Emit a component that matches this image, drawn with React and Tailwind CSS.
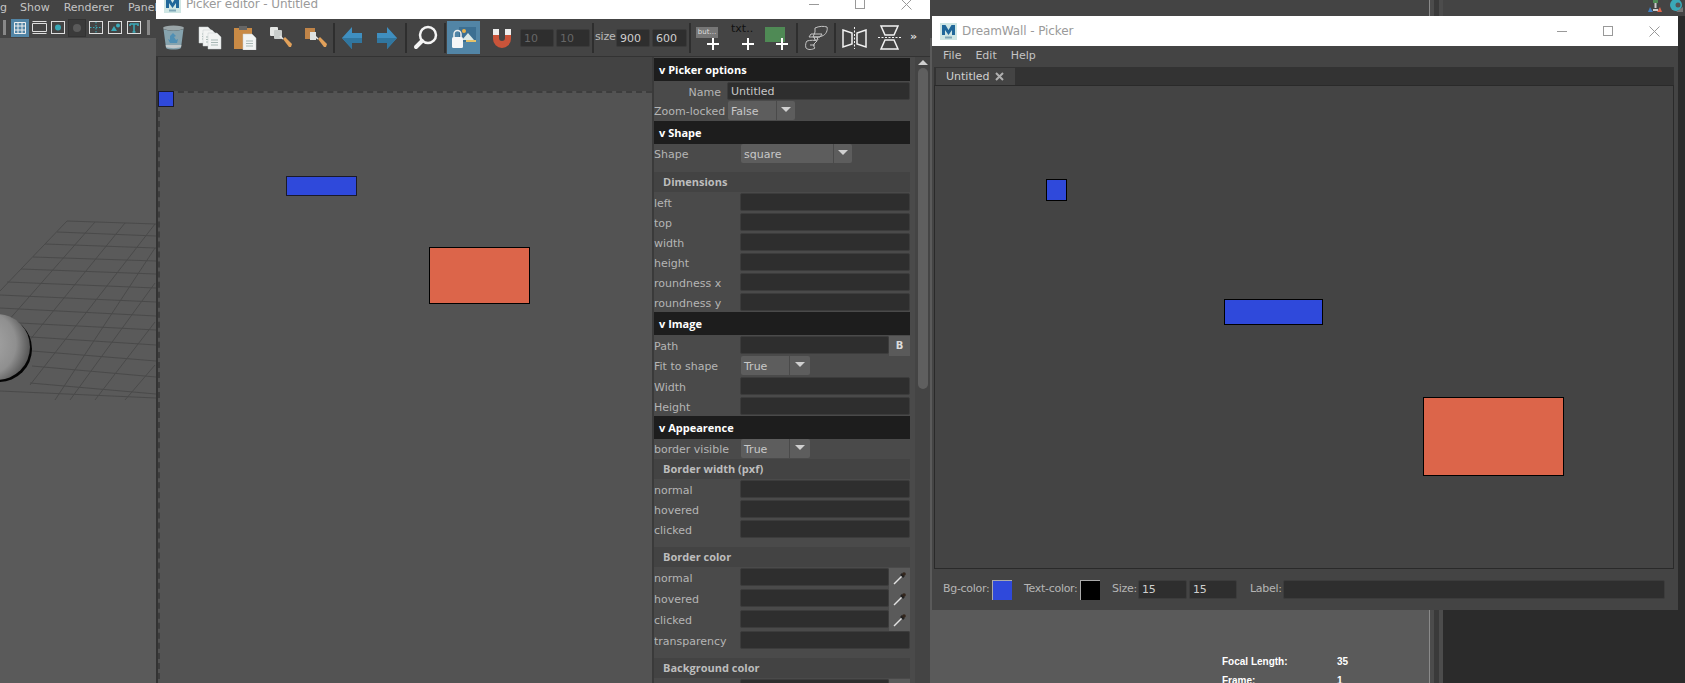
import React from "react";

const uiFont = { fontFamily: '"DejaVu Sans", sans-serif' };

function MayaLogo() {
  return (
    <svg width="17" height="17" viewBox="0 0 17 17">
      <rect width="17" height="17" fill="#cfe6e4" />
      <path d="M2 2h3.500l3 5 3-5H15v10h-3V7l-3.500 5-3.500-5v5H2z" fill="#20679a" />
      <rect x="5" y="13.500" width="7" height="2" fill="#7fa8b8" />
    </svg>
  );
}

function WinControls() {
  return (
    <div className="flex items-center h-full">
      <div className="w-[46px] flex justify-center">
        <div className="w-[10px] h-px bg-[#999]" />
      </div>
      <div className="w-[46px] flex justify-center">
        <div className="w-[10px] h-[10px] border border-[#999]" />
      </div>
      <div className="w-[46px] flex justify-center">
        <svg width="11" height="11" viewBox="0 0 11 11" stroke="#999" strokeWidth="1">
          <path d="M.5.5l10 10M10.500.5l-10 10" />
        </svg>
      </div>
    </div>
  );
}

function TitleBar({ title }) {
  return (
    <div className="h-[30px] bg-white flex items-center justify-between pl-[8px] pr-[1px] shrink-0">
      <div className="flex items-center gap-[5px]">
        <MayaLogo />
        <span className="text-[12px] tracking-[-0.1px] text-[#9a9a9a]">{title}</span>
      </div>
      <WinControls />
    </div>
  );
}

function Sep({ ml = "" }) {
  return <div className={`w-[2px] h-[30px] bg-[#2e2e2e] shrink-0 ${ml}`} />;
}

const Trash = () => (
  <svg width="23" height="25" viewBox="0 0 23 25">
    <ellipse cx="11.500" cy="3" rx="10.500" ry="2.500" fill="#9aa5a8" />
    <path d="M1.500 4l2.500 19c2 2 13 2 15 0l2.500-19c-4 2-16 2-20 0z" fill="#86a3ae" />
    <path d="M8 11l3-3 3 3-2 1 2 3 2-1-1 4h-7l-2-4 2 1z" fill="#4f8fb4" />
    <path d="M4 22c3 1.500 12 1.500 15 0l.4-2H3.700z" fill="#c2c8ca" />
  </svg>
);

const Page = ({ x, y, w = 13, h = 16 }) => (
  <g>
    <path d={`M${x} ${y}h${w - 4}l4 4v${h - 4}h-${w}z`} fill="#f2f4f3" stroke="#c5cccc" strokeWidth=".5" />
    <path d={`M${x + 3} ${y + 7}h${w - 6}M${x + 3} ${y + 9.5}h${w - 6}M${x + 3} ${y + 12}h${w - 6}`} stroke="#a9b9b6" strokeWidth="1" />
  </g>
);

const Copy = () => (
  <svg width="24" height="24" viewBox="0 0 24 24">
    <Page x={1} y={1} />
    <Page x={5} y={4} />
    <Page x={10} y={7} />
  </svg>
);

const Paste = () => (
  <svg width="25" height="24" viewBox="0 0 25 24">
    <rect x="1" y="2" width="18" height="21" fill="#c98a45" />
    <rect x="6" y="0" width="8" height="4" fill="#666" />
    <Page x={10} y={8} />
  </svg>
);

const TagCopy = ({ paste }) => (
  <svg width="24" height="23" viewBox="0 0 24 23">
    {paste
      ? <rect x="1" y="2" width="10" height="11" fill="#c08448" />
      : <rect x="1" y="1" width="8" height="9" rx="1" fill="#e4e6e4" />}
    {paste
      ? <rect x="6" y="6" width="6" height="8" fill="#dfe2e2" />
      : <rect x="5" y="4" width="8" height="9" rx="1" fill="#c9cdcb" />}
    <path d="M14 13l2-2 7 7-1 3h-2z" fill="#e2a15a" />
    <path d="M11 10l3 3" stroke="#e8e8e8" strokeWidth="1.500" />
  </svg>
);

const Arrow = ({ right }) => (
  <svg width="22" height="22" viewBox="0 0 22 22">
    <path
      d={right ? "M1 6h10V0l10 11-10 11v-6H1z" : "M21 6H11V0L1 11l10 11v-6h10z"}
      fill="#3f8fc0"
    />
    <path d={right ? "M1 11h20l-10 11v-6H1z" : "M21 11H1l10 11v-6h10z"} fill="#31769f" />
  </svg>
);

const Magnifier = () => (
  <svg width="25" height="25" viewBox="0 0 25 25" fill="none" stroke="#f4f4f4">
    <circle cx="15" cy="10" r="8" strokeWidth="2.500" />
    <path d="M9 16l-6 6" strokeWidth="4" strokeLinecap="round" />
  </svg>
);

const LockImage = () => (
  <div className="w-[33px] h-[33px] ml-[1px] bg-[#5285a6] flex items-center justify-center shrink-0">
    <svg width="26" height="26" viewBox="0 0 26 26">
      <rect x="8" y="2" width="17" height="15" fill="#3c6f92" />
      <circle cx="13" cy="6" r="2" fill="#e9b04a" />
      <path d="M11 15l6-7 6 7z" fill="#dbe8e6" />
      <rect x="15" y="15" width="10" height="2" fill="#e4c26a" />
      <path d="M3 12v-3a3.500 3.500 0 017 0v3" fill="none" stroke="#eee" strokeWidth="1.500" />
      <rect x="1" y="12" width="11" height="11" rx="1.500" fill="#f6f6f6" />
    </svg>
  </div>
);

const Magnet = () => (
  <svg width="20" height="20" viewBox="0 0 20 20">
    <path d="M1 1h6v9a3 3 0 006 0V1h6v10a9 9 0 01-18 0z" fill="#c9543a" />
    <rect x="1" y="1" width="6" height="6" fill="#eee" />
    <rect x="13" y="1" width="6" height="6" fill="#eee" />
  </svg>
);

const Plus = ({ className }) => (
  <div className={`absolute w-[12px] h-[12px] ${className}`}>
    <div className="absolute left-[5px] top-0 w-[2px] h-[12px] bg-white" />
    <div className="absolute left-0 top-[5px] w-[12px] h-[2px] bg-white" />
  </div>
);

const Linker = () => (
  <svg width="25" height="26" viewBox="0 0 25 26" fill="none" stroke="#c4c4c4" strokeWidth="1">
    <path d="M11 3c4-2 9-2 12-1 1 3-1 8-5 9l-3 1H9l2-5z" />
    <path d="M7 9h11l-2 3H5z" />
    <path d="M10 12l1 3h3l-1-3M3 16c3-1 8-1 10 0l-3 3c-1 1 0 3 1 4-3 2-7 2-9 0-1-3 0-6 1-7z" />
    <path d="M6 20h5" />
  </svg>
);

const FlipH = () => (
  <svg width="25" height="22" viewBox="0 0 25 22" fill="none" stroke="#f2f2f2" strokeWidth="1.500">
    <path d="M1 3l9 3v11l-9 3zM24 3l-9 3v11l9 3z" />
    <path d="M12.500 0v22" strokeDasharray="2 1.500" strokeWidth="1" />
  </svg>
);

const FlipV = () => (
  <svg width="23" height="25" viewBox="0 0 23 25" fill="none" stroke="#f2f2f2" strokeWidth="1.500">
    <path d="M3 1h17l-4 9H7zM3 24h17l-4-9H7z" />
    <path d="M0 12.500h23" strokeDasharray="2 1.500" strokeWidth="1" />
  </svg>
);

function ToolInput({ value, dim, className }) {
  return (
    <div className={`h-[18px] bg-[#2e2e2e] border border-[#3a3a3a] rounded-[2px] text-[11px] pl-[3px] leading-[17px] shrink-0 ${dim ? "text-[#666]" : "text-[#cfcfcf]"} ${className}`}>
      {value}
    </div>
  );
}

function EditorToolbar() {
  return (
    <div className="h-[37px] bg-[#444] flex items-center shrink-0 text-[11px]">
      <div className="w-[35px] flex justify-center"><Trash /></div>
      <div className="w-[37px] flex justify-center"><Copy /></div>
      <div className="w-[35px] flex justify-center"><Paste /></div>
      <div className="w-[35px] flex justify-center"><TagCopy /></div>
      <div className="w-[35px] flex justify-center"><TagCopy paste /></div>
      <Sep />
      <div className="w-[33px] flex justify-center"><Arrow /></div>
      <div className="w-[37px] flex justify-center"><Arrow right /></div>
      <Sep />
      <div className="w-[37px] flex justify-center"><Magnifier /></div>
      <Sep />
      <LockImage />
      <div className="w-[40px] pl-[4px] flex justify-center"><Magnet /></div>
      <ToolInput value="10" dim className="w-[34px]" />
      <ToolInput value="10" dim className="w-[34px] ml-[2px]" />
      <Sep ml="ml-[2px]" />
      <span className="text-[#bbb] ml-[1px] w-[21px] tracking-[-0.2px]">size</span>
      <ToolInput value="900" className="w-[34px]" />
      <ToolInput value="600" className="w-[35px] ml-[2px]" />
      <Sep ml="ml-[2px]" />
      <div className="relative w-[38px] h-[30px]">
        <div className="absolute left-[5px] top-[4px] w-[22px] h-[11px] bg-[#777] text-[7px] leading-[10px] text-[#ddd] text-center">but...</div>
        <Plus className="left-[16px] top-[15px]" />
      </div>
      <div className="relative w-[34px] h-[30px]">
        <div className="absolute left-[2px] top-[-1px] text-[11px] leading-[14px] text-[#111]">txt..</div>
        <Plus className="left-[13px] top-[15px]" />
      </div>
      <div className="relative w-[33px] h-[30px]">
        <div className="absolute left-[2px] top-[4px] w-[20px] h-[15px] bg-[#4f8a55]" />
        <Plus className="left-[13px] top-[15px]" />
      </div>
      <Sep />
      <div className="w-[36px] flex justify-center"><Linker /></div>
      <Sep />
      <div className="w-[36px] flex justify-center"><FlipH /></div>
      <div className="w-[34px] flex justify-center"><FlipV /></div>
      <span className="text-[#ddd] font-bold text-[11px] ml-[4px]">»</span>
    </div>
  );
}

function Header({ text }) {
  return (
    <div className="h-[23px] bg-[#1d1d1d] text-white font-bold text-[11px] leading-[23px] pl-[5px] shrink-0 font-['Open_Sans']">
      v {text}
    </div>
  );
}

function Group({ text }) {
  return (
    <div className="h-[20px] mb-[1px] bg-[#434343] text-[#bdbdbd] font-bold text-[11px] leading-[20px] pl-[9px] shrink-0 font-['Open_Sans']">
      {text}
    </div>
  );
}

function TextBox({ value, className = "flex-1" }) {
  return (
    <div className={`h-[18px] bg-[#2e2e2e] border border-[#3c3c3c] rounded-[2px] pl-[3px] text-[11px] leading-[18px] text-[#c8c8c8] ${className}`}>
      {value}
    </div>
  );
}

function Row({ label, h = "h-[20px]", children }) {
  return (
    <div className={`flex items-start shrink-0 ${h}`}>
      <span className="w-[86px] shrink-0 text-[11px] leading-[21px] text-[#b5b5b5] whitespace-nowrap">{label}</span>
      {children}
    </div>
  );
}

function Combo({ value, w, arrowW = "w-[18px]" }) {
  return (
    <div className="flex h-[19px] gap-[1px] ml-[1px]">
      <div className={`${w} bg-[#5d5d5d] rounded-l-[2px] pl-[3px] text-[11px] leading-[21px] text-[#c8c8c8]`}>{value}</div>
      <div className={`${arrowW} bg-[#5d5d5d] rounded-r-[2px] flex items-center justify-center pb-[2px]`}>
        <div className="w-0 h-0 border-l-[5px] border-r-[5px] border-t-[5px] border-l-transparent border-r-transparent border-t-[#d0d0d0]" />
      </div>
    </div>
  );
}

function Dropper() {
  return (
    <div className="w-[21px] h-[21px] bg-[#5a5a5a] flex items-center justify-center shrink-0">
      <svg width="15" height="15" viewBox="0 0 15 15" fill="none">
        <path d="M2 13l8-8" stroke="#e2e2e2" strokeWidth="1.500" />
        <path d="M9 3l3 3" stroke="#222" strokeWidth="2.500" />
        <circle cx="12" cy="3" r="1.800" fill="#33261c" />
      </svg>
    </div>
  );
}

function Panel() {
  return (
    <div className="w-[261px] pt-[1px] pr-[5px] flex flex-col bg-[#4a4a4a] overflow-hidden">
      <Header text="Picker options" />
      <div className="flex h-[19px] mt-[1px] items-start shrink-0">
        <span className="w-[67px] text-right text-[11px] leading-[21px] text-[#b5b5b5]">Name</span>
        <TextBox value="Untitled" className="ml-[6px] w-[183px]" />
      </div>
      <div className="flex h-[20px] items-start shrink-0">
        <span className="w-[73px] text-[11px] leading-[21px] text-[#b5b5b5] whitespace-nowrap">Zoom-locked</span>
        <Combo value="False" w="w-[48px]" />
      </div>
      <Header text="Shape" />
      <Row label="Shape" h="h-[19px]">
        <Combo value="square" w="w-[92px]" />
      </Row>
      <div className="h-[9px] shrink-0" />
      <Group text="Dimensions" />
      {["left", "top", "width", "height", "roundness x"].map((l) => (
        <Row key={l} label={l}><TextBox className="w-[170px]" /></Row>
      ))}
      <Row label="roundness y" h="h-[19px]"><TextBox className="w-[170px]" /></Row>
      <Header text="Image" />
      <div className="h-[1px] shrink-0" />
      <Row label="Path">
        <TextBox className="w-[149px]" />
        <div className="w-[21px] h-[20px] bg-[#5a5a5a] text-[#ddd] font-bold text-[10px] leading-[20px] text-center">B</div>
      </Row>
      <Row label="Fit to shape" h="h-[21px]">
        <Combo value="True" w="w-[48px]" arrowW="w-[20px]" />
      </Row>
      <Row label="Width"><TextBox className="w-[170px]" /></Row>
      <Row label="Height" h="h-[19px]"><TextBox className="w-[170px]" /></Row>
      <Header text="Appearence" />
      <Row label="border visible">
        <Combo value="True" w="w-[48px]" arrowW="w-[20px]" />
      </Row>
      <Group text="Border width (pxf)" />
      {["normal", "hovered", "clicked"].map((l) => (
        <Row key={l} label={l}><TextBox className="w-[170px]" /></Row>
      ))}
      <div className="h-[7px] shrink-0" />
      <Group text="Border color" />
      {["normal", "hovered", "clicked"].map((l) => (
        <Row key={l} label={l} h="h-[21px]">
          <TextBox className="w-[149px]" />
          <Dropper />
        </Row>
      ))}
      <Row label="transparency" h="h-[21px]"><TextBox className="w-[170px]" /></Row>
      <div className="h-[6px] shrink-0" />
      <Group text="Background color" />
      <Row label="normal" h="h-[21px]">
        <TextBox className="w-[149px]" />
        <Dropper />
      </Row>
    </div>
  );
}

function Scrollbar() {
  return (
    <div className="w-[15px] bg-[#444] flex flex-col items-center pt-[3px]">
      <div className="w-0 h-0 border-l-[5px] border-r-[5px] border-b-[5px] border-l-transparent border-r-transparent border-b-[#d0d0d0]" />
      <div className="w-[10px] h-[321px] mt-[3px] bg-[#5f5f5f] rounded-[5px]" />
    </div>
  );
}

function EditorWindow() {
  return (
    <div className="absolute left-[156px] top-[-11px] w-[774px] h-[700px] flex flex-col bg-[#444]">
      <TitleBar title="Picker editor - Untitled" />
      <EditorToolbar />
      <div className="flex flex-1 border-t border-[#333] min-h-0">
        <div className="relative w-[496px] flex flex-col border-l-2 border-[#333]">
          <div className="h-[34px] bg-[#434343]" />
          <div className="flex-1 bg-[#535353] border-t-2 border-l-2 border-dashed border-[#3d3d3d]" />
          <div className="absolute left-[0px] top-[34px] w-[16px] h-[16px] bg-[#2f49db] border border-[#1a1a2a]" />
          <div className="absolute left-[128px] top-[119px] w-[71px] h-[20px] bg-[#2f49db] border border-[#1a1a2a]" />
          <div className="absolute left-[271px] top-[190px] w-[101px] h-[57px] bg-[#dc654a] border border-black" />
        </div>
        <div className="w-[2px] bg-[#3a3a3a]" />
        <Panel />
        <Scrollbar />
      </div>
    </div>
  );
}

function SmallField({ value, className }) {
  return (
    <div className={`h-[19px] bg-[#2e2e2e] border border-[#3c3c3c] rounded-[2px] pl-[3px] text-[11px] leading-[18px] text-[#cfcfcf] shrink-0 ${className}`}>
      {value}
    </div>
  );
}

function PickerWindow() {
  return (
    <div className="absolute left-[932px] top-[16px] w-[746px] h-[594px] flex flex-col bg-[#444]">
      <TitleBar title="DreamWall - Picker" />
      <div className="h-[21px] flex items-center gap-[14px] pl-[11px] text-[11px] text-[#c4c4c4] shrink-0">
        <span>File</span>
        <span>Edit</span>
        <span>Help</span>
      </div>
      <div className="h-[18px] bg-[#333] flex items-end pl-[2px] mr-[4px] ml-[2px] shrink-0">
        <div className="w-[79px] h-[17px] bg-[#444] flex items-center pl-[10px] pt-[2px] gap-[5px] text-[11px] text-[#d0d0d0]">
          Untitled
          <svg width="9" height="9" viewBox="0 0 9 9" stroke="#b0b0b0" strokeWidth="2" className="mb-[2px]">
            <path d="M1 1l7 7M8 1l-7 7" />
          </svg>
        </div>
      </div>
      <div className="relative h-[484px] mx-[2px] mr-[4px] border border-[#2a2a2a] bg-[#444] shrink-0">
        <div className="absolute left-[111px] top-[93px] w-[21px] h-[22px] bg-[#2f49db] border border-black" />
        <div className="absolute left-[289px] top-[213px] w-[99px] h-[26px] bg-[#2f49db] border border-black" />
        <div className="absolute left-[488px] top-[311px] w-[141px] h-[79px] bg-[#dc654a] border border-black" />
      </div>
      <div className="flex items-center h-[41px] pl-[11px] text-[11px] tracking-[-0.3px] text-[#b5b5b5] shrink-0">
        <span className="w-[49px] whitespace-nowrap">Bg-color:</span>
        <div className="w-[20px] h-[20px] bg-[#2f49db] border-t border-l border-[#aaa]" />
        <span className="ml-[12px] w-[56px] whitespace-nowrap">Text-color:</span>
        <div className="w-[20px] h-[20px] bg-black border-t border-l border-[#aaa]" />
        <span className="ml-[12px] w-[26px]">Size:</span>
        <SmallField value="15" className="w-[49px]" />
        <SmallField value="15" className="w-[48px] ml-[2px]" />
        <span className="ml-[13px] w-[33px]">Label:</span>
        <SmallField className="w-[382px]" />
      </div>
    </div>
  );
}

function GridSphere() {
  // perspective floor lines measured off the reference
  const rows = [
    [67, 221, 156, 224], [57, 232, 156, 236], [45, 244, 156, 248], [33, 257, 156, 261],
    [21, 269, 156, 274], [7, 282, 156, 288], [0, 295, 156, 302], [0, 308, 156, 316],
    [0, 322, 156, 330], [0, 335, 156, 345], [20, 350, 156, 361], [32, 366, 156, 377],
    [30, 383, 156, 394], [0, 391, 156, 398],
  ];
  const cols = [
    [67, 221, 0, 291], [95, 222, 0, 330], [125, 223, 20, 352], [155, 224, 30, 385],
    [155, 248, 55, 400], [155, 283, 70, 400], [155, 322, 95, 400], [155, 365, 125, 400],
  ];
  return (
    <svg width="156" height="400" className="absolute left-0 top-[38px]" viewBox="0 38 156 400" fill="none">
      <g stroke="#4a4a4a" strokeWidth="1">
        {rows.map((r, i) => <line key={i} x1={r[0]} y1={r[1]} x2={r[2]} y2={r[3]} />)}
        {cols.map((c, i) => <line key={i} x1={c[0]} y1={c[1]} x2={c[2]} y2={c[3]} />)}
      </g>
      <defs>
        <radialGradient id="ball" cx="0.3" cy="0.45" r="0.75">
          <stop offset="0" stopColor="#aaaaaa" />
          <stop offset="0.65" stopColor="#8f8f8f" />
          <stop offset="1" stopColor="#4a4a4a" />
        </radialGradient>
      </defs>
      <circle cx="-1" cy="349" r="33" fill="#050505" />
      <circle cx="-3" cy="347" r="33" fill="url(#ball)" />
    </svg>
  );
}

function ViewIcon({ children, active, dark }) {
  return (
    <div className={`w-[18px] h-[18px] flex items-center justify-center shrink-0 ${active ? "bg-[#5285a6]" : ""} ${dark ? "bg-[#3a3a3a] border border-[#333]" : ""}`}>
      {children}
    </div>
  );
}

function ViewToolbar() {
  return (
    <div className="h-[21px] flex items-center pl-[3px] gap-[1px]">
      <div className="w-[3px] h-[15px] bg-[#888] mr-[4px]" />
      <ViewIcon active>
        <svg width="14" height="14" viewBox="0 0 14 14" fill="none" stroke="#eee" strokeWidth="1">
          <path d="M1.500 1.500h11v11h-11zM5 1.500v11M9 1.500v11M1.500 5h11M1.500 9h11" />
        </svg>
      </ViewIcon>
      <ViewIcon>
        <svg width="15" height="13" viewBox="0 0 15 13" fill="none" stroke="#ddd" strokeWidth="1">
          <path d="M.5 2.500h14v8H.5zM.5.500h14M.5 12.500h14" />
        </svg>
      </ViewIcon>
      <ViewIcon>
        <svg width="14" height="13" viewBox="0 0 14 13">
          <rect x=".5" y=".5" width="13" height="12" fill="none" stroke="#ddd" />
          <circle cx="7" cy="6.500" r="3" fill="#3aa9b8" />
        </svg>
      </ViewIcon>
      <ViewIcon dark>
        <svg width="14" height="14" viewBox="0 0 14 14">
          <circle cx="7" cy="7" r="4" fill="#5a5a5a" />
        </svg>
      </ViewIcon>
      <ViewIcon>
        <svg width="14" height="13" viewBox="0 0 14 13" fill="none">
          <rect x=".5" y=".5" width="13" height="12" stroke="#ddd" />
          <path d="M7 1v11M1 6.500h12" stroke="#3aa9b8" strokeDasharray="1.500 1.500" />
        </svg>
      </ViewIcon>
      <ViewIcon>
        <svg width="14" height="13" viewBox="0 0 14 13">
          <rect x=".5" y=".5" width="13" height="12" fill="none" stroke="#ddd" />
          <path d="M3 10l3-5 3 5z" fill="#3aa9b8" />
          <circle cx="10" cy="4.500" r="2" fill="#3aa9b8" />
        </svg>
      </ViewIcon>
      <ViewIcon>
        <svg width="14" height="13" viewBox="0 0 14 13">
          <rect x=".5" y=".5" width="13" height="12" fill="none" stroke="#ddd" />
          <path d="M3 3h8v2M7 3v8M5.500 11h3M3 3v2" fill="none" stroke="#3aa9b8" strokeWidth="1.500" />
        </svg>
      </ViewIcon>
      <div className="w-[3px] h-[15px] bg-[#888] ml-[3px]" />
    </div>
  );
}

export default function App() {
  return (
    <div className="relative w-[1685px] h-[683px] overflow-hidden flex bg-[#2b2b2b]" style={uiFont}>
      <div className="relative w-[1429px] flex flex-col">
        <div className="h-[38px] bg-[#444] shrink-0">
          <div className="h-[17px] flex items-center gap-[14px] text-[11px] text-[#c4c4c4] whitespace-nowrap">
            <span className="w-[6px]">g</span>
            <span>Show</span>
            <span>Renderer</span>
            <span>Panels</span>
          </div>
          <ViewToolbar />
        </div>
        <div className="flex-1 bg-[#5a5a5a]" />
        <div className="absolute left-[1222px] top-[652px] text-[10px] font-bold text-white leading-[19px] flex gap-[42px] font-['Liberation_Sans']">
          <div>
            <div className="w-[73px]">Focal Length:</div>
            <div>Frame:</div>
          </div>
          <div>
            <div>35</div>
            <div>1</div>
          </div>
        </div>
      </div>
      <div className="w-[14px] flex bg-[#444]">
        <div className="w-px bg-[#8a8a8a]" />
        <div className="w-[4px] bg-[#4c4c4c]" />
        <div className="w-[5px] bg-[#3a3a3a]" />
        <div className="w-[4px] bg-[#4c4c4c]" />
      </div>
      <div className="flex-1">
        <div className="h-[16px] bg-[#444] flex justify-end items-start gap-[7px] pr-[2px]">
          <svg width="14" height="13" viewBox="0 0 14 13">
            <rect x="5" y="0" width="5" height="3" fill="#4f8a55" />
            <path d="M7.500 3v5" stroke="#ccc" strokeWidth="2" />
            <path d="M0 12l2-5 3 5z" fill="#3f7fc0" />
            <path d="M9 12l3-5 2 5z" fill="#dc654a" />
            <rect x="5" y="9" width="5" height="2" fill="#ccc" />
          </svg>
          <svg width="14" height="13" viewBox="0 0 14 13">
            <circle cx="7" cy="5" r="6" fill="#3aa9b8" />
            <circle cx="9" cy="5" r="2.500" fill="#555" />
            <path d="M7 12l7-5v5z" fill="#777" />
          </svg>
        </div>
      </div>
      <div className="absolute left-[0px] top-0 h-full w-[156px] pointer-events-none">
        <GridSphere />
      </div>
      <EditorWindow />
      <PickerWindow />
    </div>
  );
}
